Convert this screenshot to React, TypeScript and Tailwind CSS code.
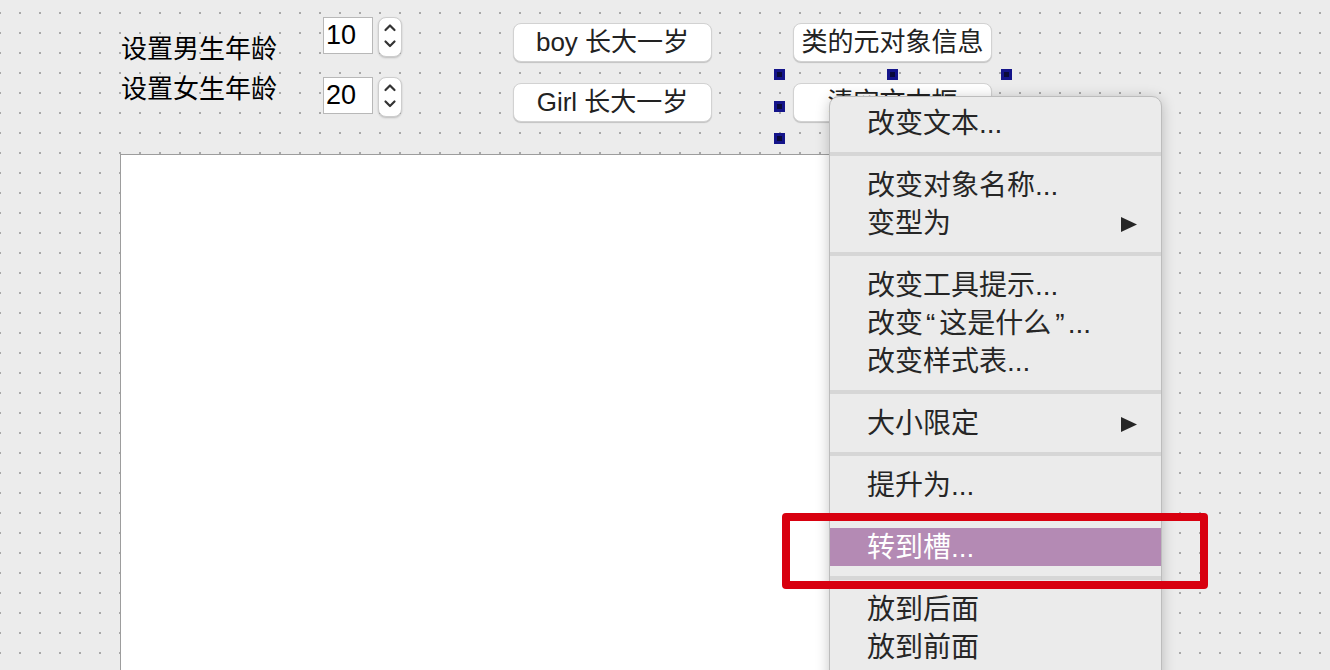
const font = "font-['Liberation_Sans','Noto_Sans_CJK_SC',sans-serif]"

const handles = [
  "left-[774px] top-[69px]",
  "left-[887px] top-[69px]",
  "left-[1001px] top-[69px]",
  "left-[774px] top-[101px]",
  "left-[1001px] top-[101px]",
  "left-[774px] top-[133px]",
  "left-[887px] top-[133px]",
  "left-[1001px] top-[133px]",
]

type MenuEntry = { label: React.ReactNode; sub?: boolean; active?: boolean } | "sep"

const menu: MenuEntry[] = [
  { label: "改变文本..." },
  "sep",
  { label: "改变对象名称..." },
  { label: "变型为", sub: true },
  "sep",
  { label: "改变工具提示..." },
  {
    label: (
      <>
        改变<span className="pl-[3px] pr-[4px]">“</span>这是什么<span className="pl-[4px] pr-[3px]">”</span>...
      </>
    ),
  },
  { label: "改变样式表..." },
  "sep",
  { label: "大小限定", sub: true },
  "sep",
  { label: "提升为..." },
  "sep",
  { label: "转到槽...", active: true },
  "sep",
  { label: "放到后面" },
  { label: "放到前面" },
]

function SpinBox({ value }: { value: string }) {
  return (
    <div className="flex items-start gap-[5px]">
      <div className="w-[50px] h-[37px] bg-white border border-[#b8b8b8] pl-[2px] text-[27px] leading-[35px] text-black">
        {value}
      </div>
      <div className="w-[24px] h-[40px] bg-white rounded-[8px] border border-[#cdcdcd] shadow-[0_1px_2px_rgba(0,0,0,0.2)]">
        <svg width="22" height="38" viewBox="0 0 22 38" fill="none" stroke="#333" strokeWidth="2.2" strokeLinecap="round" strokeLinejoin="round">
          <path d="M6.5 12 L11 7.5 L15.5 12" />
          <path d="M6.5 23.5 L11 28 L15.5 23.5" />
        </svg>
      </div>
    </div>
  )
}

function Button({ children }: { children: React.ReactNode }) {
  return (
    <div className="w-[199px] h-[39px] bg-white rounded-[8px] border border-[#d2d2d2] shadow-[0_1px_1px_rgba(0,0,0,0.18)] flex items-center justify-center text-[26px] text-[#222]">
      {children}
    </div>
  )
}

export default function App() {
  return (
    <div
      className={`relative w-[1330px] h-[670px] overflow-hidden bg-[#ececec] bg-[radial-gradient(circle,#a9a9a9_1px,transparent_1.5px)] bg-size-[20px_20px] bg-position-[-10px_3px] ${font}`}
    >
      <div className="flex h-[154px] pl-[121px]">
        <div className="w-[202px] pt-[29px] flex flex-col text-[26px] leading-[40px] text-black">
          <div>设置男生年龄</div>
          <div>设置女生年龄</div>
        </div>
        <div className="w-[190px] pt-[17px] flex flex-col gap-[20px]">
          <SpinBox value="10" />
          <SpinBox value="20" />
        </div>
        <div className="w-[280px] pt-[23px] flex flex-col gap-[21px]">
          <Button>boy 长大一岁</Button>
          <Button>Girl 长大一岁</Button>
        </div>
        <div className="pt-[23px] flex flex-col gap-[21px]">
          <Button>类的元对象信息</Button>
          <Button>清空文本框</Button>
        </div>
      </div>

      <div className="ml-[120px] w-[780px] h-[516px] bg-white border-l border-t border-[#9d9d9d]" />

      {handles.map((pos) => (
        <div key={pos} className={`absolute ${pos} w-[11px] h-[11px] bg-[#14148a] flex items-center justify-center`}>
          <div className="w-[5px] h-[5px] bg-[#0a0a3a]" />
        </div>
      ))}

      <div className="absolute left-[829px] top-[96px] w-[333px] h-[620px] bg-[#ebebeb] border border-[#bcbcbc] rounded-[10px] shadow-[0_2px_14px_rgba(0,0,0,0.22)] pt-[7px] text-[28px] text-[#262626]">
        {menu.map((m, i) =>
          m === "sep" ? (
            <div key={i} className="h-[24px] flex items-center">
              <div className="w-full h-[4px] bg-[#d6d6d6]" />
            </div>
          ) : (
            <div
              key={i}
              className={`h-[38px] flex items-center justify-between pl-[37px] pr-[24px] pt-[2px] ${
                m.active ? "bg-[#b48ab4] text-white" : ""
              }`}
            >
              <span>{m.label}</span>
              {m.sub && (
                <svg width="16" height="15" viewBox="0 0 16 15">
                  <polygon points="0,0 16,7.5 0,15" fill="#262626" />
                </svg>
              )}
            </div>
          )
        )}
      </div>

      <div className="absolute left-[782px] top-[513px] w-[426px] h-[76px] border-[8px] border-[#d8000f] rounded-[4px]" />
    </div>
  )
}
